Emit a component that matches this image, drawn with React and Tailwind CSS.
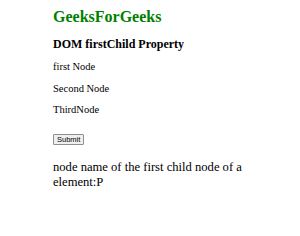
export default function App() {
  return (
    <div className="w-[300px] h-[236px] bg-white text-black pl-[53px] pt-[7px] font-['Liberation_Serif',serif]">
      <h1 className="text-[16px] leading-[20px] font-bold text-[#008000]">GeeksForGeeks</h1>
      <h2 className="mt-[10px] text-[12px] leading-[14px] font-bold">DOM firstChild Property</h2>
      <p className="mt-[10px] text-[10.5px] leading-[12px]">first Node</p>
      <p className="mt-[9.5px] text-[10.5px] leading-[12px]">Second Node</p>
      <p className="mt-[9.5px] text-[10.5px] leading-[12px]">ThirdNode</p>
      <button className="mt-[18px] block h-[11px] px-[3px] text-[7.5px] leading-[9px] font-['Liberation_Sans',sans-serif] bg-[#efefef] border border-[#8f8f8f] rounded-[1px]">
        Submit
      </button>
      <p className="mt-[15px] text-[12.6px] leading-[14.5px] w-[235px]">
        node name of the first child node of a element:P
      </p>
    </div>
  );
}
